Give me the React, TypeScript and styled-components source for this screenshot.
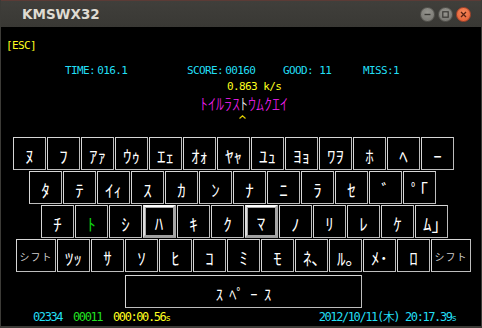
import { createGlobalStyle, styled } from "styled-components";

const GlobalStyle = createGlobalStyle`
  html, body {
    margin: 0;
    padding: 0;
    background: #000;
  }
  #root {
    width: 482px;
    height: 328px;
  }
`;

const CYAN = "#22dff4";
const YELLOW = "#ffff1e";
const GREEN = "#22e022";
const MAGENTA = "#ff22ff";

const Window = styled.div`
  width: 482px;
  height: 328px;
  box-sizing: border-box;
  display: flex;
  flex-direction: column;
  background: #3c3b37;
  padding: 0 1px 2px;
  overflow: hidden;
`;

const TitleBar = styled.div`
  height: 27px;
  flex: none;
  box-sizing: border-box;
  display: flex;
  align-items: center;
  padding: 0 10px 0 21px;
  background: linear-gradient(#403f3b, #393834);
  border-top: 1px solid #5b3b36;
`;

const Title = styled.span`
  font-family: "DejaVu Sans", sans-serif;
  font-weight: bold;
  font-size: 13.5px;
  color: #dfdbd2;
`;

const Controls = styled.div`
  margin-left: auto;
  display: flex;
  gap: 3px;
`;

const CtrlButton = styled.div<{ $close?: boolean }>`
  width: 15px;
  height: 15px;
  box-sizing: border-box;
  border-radius: 50%;
  display: flex;
  align-items: center;
  justify-content: center;
  border: 1px solid ${(p) => (p.$close ? "#a8442a" : "#55544f")};
  background: ${(p) =>
    p.$close
      ? "radial-gradient(circle at 50% 35%, #f88a5c, #e05a30)"
      : "radial-gradient(circle at 50% 35%, #96958f, #72716c)"};
`;

const Screen = styled.div`
  flex: 1;
  background: #000;
  padding-top: 13px;
  font-family: "DejaVu Sans Mono", monospace;
  font-size: 11px;
  letter-spacing: -0.6px;
`;

const TextLine = styled.div<{ $indent: number; $color: string; $top?: number }>`
  height: 12px;
  line-height: 12px;
  white-space: pre;
  padding-left: ${(p) => p.$indent}px;
  margin-top: ${(p) => p.$top ?? 0}px;
  color: ${(p) => p.$color};
`;

const CaretMark = styled.div`
  height: 4px;
  margin-top: 4px;
  padding-left: 238px;
  display: flex;
`;

const StatsRow = styled.div`
  display: flex;
  height: 12px;
  line-height: 12px;
  margin-top: 13px;
  padding-left: 64px;
  color: ${CYAN};
  white-space: pre;
`;

const Stat = styled.div<{ $w?: number }>`
  width: ${(p) => (p.$w ? `${p.$w}px` : "auto")};
  display: flex;
`;

const StatValue = styled.span<{ $gap: number }>`
  margin-left: ${(p) => p.$gap}px;
`;

const Prompt = styled.div`
  height: 16px;
  line-height: 16px;
  margin-top: 2px;
  padding-left: 199px;
  font-family: "Noto Sans CJK JP", sans-serif;
  font-weight: 300;
  font-size: 16px;
  letter-spacing: 0;
  color: ${MAGENTA};
`;

const Cursor = styled.span`
  color: #fff;
`;

const Keyboard = styled.div`
  display: flex;
  flex-direction: column;
  gap: 1px;
  margin-top: 18px;
`;

const KeyRow = styled.div<{ $indent: number }>`
  display: flex;
  gap: 1px;
  padding-left: ${(p) => p.$indent}px;
`;

const Key = styled.div<{ $w?: number; $hit?: boolean; $green?: boolean; $small?: boolean }>`
  width: ${(p) => p.$w ?? 33}px;
  height: 33px;
  box-sizing: border-box;
  display: flex;
  align-items: center;
  justify-content: center;
  padding-top: ${(p) => (p.$small ? 1 : 3)}px;
  font-family: "Noto Sans CJK JP", sans-serif;
  font-size: ${(p) => (p.$small ? 10 : 17)}px;
  letter-spacing: ${(p) => (p.$small ? 1 : 0)}px;
  color: ${(p) => (p.$green ? "#10d010" : p.$small ? "#cfcfcf" : "#fff")};
  border: 1px solid #d6d6d6;
  border-right-color: #bdbdbd;
  border-bottom-color: #bdbdbd;
  ${(p) =>
    p.$hit &&
    `
    border-width: 2px 3px 3px 2px;
    border-color: #fff #a6a6a6 #a0a0a0 #dedede;
    box-shadow: inset 1px 1px 0 #a6a6a6;
  `}
`;

const SpaceBar = styled.div`
  width: 237px;
  height: 33px;
  box-sizing: border-box;
  margin: 2px 0 0 124px;
  display: flex;
  align-items: center;
  justify-content: center;
  padding-top: 3px;
  border: 1px solid #d6d6d6;
  border-right-color: #bdbdbd;
  border-bottom-color: #bdbdbd;
  font-family: "Noto Sans CJK JP", sans-serif;
  font-size: 14.5px;
  letter-spacing: 0;
  white-space: pre;
  color: #fff;
`;

const StatusBar = styled.div`
  display: flex;
  height: 13px;
  line-height: 13px;
  margin-top: 3px;
  padding: 0 24px 0 32px;
  font-size: 12px;
  letter-spacing: -1.4px;
  white-space: pre;
`;

const StatusItem = styled.span<{ $color: string; $w?: number }>`
  color: ${(p) => p.$color};
  width: ${(p) => (p.$w ? `${p.$w}px` : "auto")};
`;

const Clock = styled(StatusItem)`
  margin-left: auto;
`;

const Unit = styled.span`
  font-size: 9px;
  letter-spacing: 0;
`;

const rows: { indent: number; keys: string[] }[] = [
  { indent: 12, keys: ["ﾇ", "ﾌ", "ｱｧ", "ｳｩ", "ｴｪ", "ｵｫ", "ﾔｬ", "ﾕｭ", "ﾖｮ", "ﾜｦ", "ﾎ", "ﾍ", "ｰ"] },
  { indent: 28, keys: ["ﾀ", "ﾃ", "ｲｨ", "ｽ", "ｶ", "ﾝ", "ﾅ", "ﾆ", "ﾗ", "ｾ", "ﾞ", "ﾟ｢"] },
  { indent: 40, keys: ["ﾁ", "ﾄ", "ｼ", "ﾊ", "ｷ", "ｸ", "ﾏ", "ﾉ", "ﾘ", "ﾚ", "ｹ", "ﾑ｣"] },
  { indent: 15, keys: ["シフト", "ﾂｯ", "ｻ", "ｿ", "ﾋ", "ｺ", "ﾐ", "ﾓ", "ﾈ､", "ﾙ｡", "ﾒ･", "ﾛ", "シフト"] },
];

const pressed = ["ﾊ", "ﾏ"];
const nextKey = "ﾄ";

function App() {
  return (
    <>
      <GlobalStyle />
      <Window>
        <TitleBar>
          <Title>KMSWX32</Title>
          <Controls>
            <CtrlButton>
              <svg width="7" height="7" viewBox="0 0 7 7">
                <path d="M0.5 3.5h6" stroke="#3a3935" strokeWidth="1.4" />
              </svg>
            </CtrlButton>
            <CtrlButton>
              <svg width="7" height="7" viewBox="0 0 7 7">
                <rect x="0.8" y="0.8" width="5.4" height="5.4" fill="none" stroke="#3a3935" strokeWidth="1.2" />
              </svg>
            </CtrlButton>
            <CtrlButton $close>
              <svg width="7" height="7" viewBox="0 0 7 7">
                <path d="M1 1l5 5M6 1l-5 5" stroke="#5a2212" strokeWidth="1.3" />
              </svg>
            </CtrlButton>
          </Controls>
        </TitleBar>
        <Screen>
          <TextLine $indent={5} $color={YELLOW}>[ESC]</TextLine>
          <StatsRow>
            <Stat $w={122}>
              TIME:<StatValue $gap={2}>016.1</StatValue>
            </Stat>
            <Stat $w={96}>
              SCORE:<StatValue $gap={2}>00160</StatValue>
            </Stat>
            <Stat $w={80}>GOOD: 11</Stat>
            <Stat>MISS:1</Stat>
          </StatsRow>
          <TextLine $indent={226} $color={YELLOW} $top={4}>0.863 k/s</TextLine>
          <Prompt>
            ﾄｲﾙﾗｽ<Cursor>ﾄ</Cursor>ｳﾑｸｴｲ
          </Prompt>
          <CaretMark>
            <svg width="7" height="4" viewBox="0 0 7 4">
              <path d="M0.5 3.5L3.5 0.8L6.5 3.5" fill="none" stroke="#e0d000" strokeWidth="1.2" />
            </svg>
          </CaretMark>
          <Keyboard>
            {rows.map((row, ri) => (
              <KeyRow key={ri} $indent={row.indent}>
                {row.keys.map((k, ki) => (
                  <Key
                    key={ki}
                    $w={k === "シフト" ? 40 : 33}
                    $small={k === "シフト"}
                    $hit={pressed.includes(k)}
                    $green={k === nextKey}
                  >
                    {k}
                  </Key>
                ))}
              </KeyRow>
            ))}
            <SpaceBar>{"ｽ  ﾍﾟ  ｰ  ｽ"}</SpaceBar>
          </Keyboard>
          <StatusBar>
            <StatusItem $color={CYAN} $w={40}>02334</StatusItem>
            <StatusItem $color={GREEN} $w={40}>00011</StatusItem>
            <StatusItem $color={YELLOW}>
              000:00.56<Unit>s</Unit>
            </StatusItem>
            <Clock $color={CYAN}>
              2012/10/11(木) 20:17.39<Unit>s</Unit>
            </Clock>
          </StatusBar>
        </Screen>
      </Window>
    </>
  );
}

export default App;
